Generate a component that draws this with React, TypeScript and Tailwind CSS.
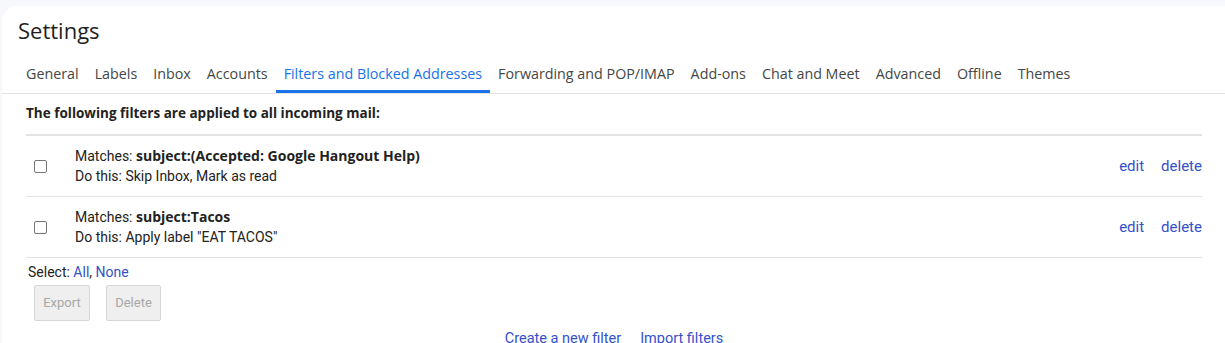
const tabs = [
  "General",
  "Labels",
  "Inbox",
  "Accounts",
  "Filters and Blocked Addresses",
  "Forwarding and POP/IMAP",
  "Add-ons",
  "Chat and Meet",
  "Advanced",
  "Offline",
  "Themes",
];

const filters = [
  { match: "subject:(Accepted: Google Hangout Help)", action: "Skip Inbox, Mark as read" },
  { match: "subject:Tacos", action: 'Apply label "EAT TACOS"' },
];

export default function App() {
  return (
    <div className="h-[343px] overflow-hidden bg-[#f6f8fc] pl-[2px] pt-[6px] font-['Roboto',_'Liberation_Sans',_sans-serif]">
      <div className="h-full rounded-tl-2xl bg-white">
        <h1 className="pl-[16px] pt-[10px] text-[22px] leading-[28px] text-[#1f1f1f] font-['Open_Sans',_'Roboto',_sans-serif]">
          Settings
        </h1>

        <div className="mt-[11px] flex border-b border-[#e3e3e3] pl-[16px] font-['Open_Sans',_'Roboto',_sans-serif]">
          {tabs.map((tab) => {
            const active = tab === "Filters and Blocked Addresses";
            return (
              <div
                key={tab}
                className={
                  active
                    ? "flex h-[38px] items-center px-2 pb-[1px] text-[14.3px] text-[#1a73e8] shadow-[inset_0_-3px_0_#1a73e8]"
                    : "flex h-[38px] items-center px-2 pb-[1px] text-[14.3px] text-[#444746]"
                }
              >
                {tab}
              </div>
            );
          })}
        </div>

        <div className="pl-[24px] pr-[23px] text-[14px] text-[#222]">
          <div className="flex h-[42px] items-center border-b-2 border-[#e3e3e3] pb-[1px] text-[13.5px] font-bold font-['Open_Sans',_'Roboto',_sans-serif]">
            The following filters are applied to all incoming mail:
          </div>

          {filters.map((f) => (
            <div key={f.match} className="flex h-[61px] items-center border-b border-[#e3e3e3]">
              <div className="flex w-[49px] justify-start pl-[8px]">
                <span className="block h-[13px] w-[13px] rounded-[2px] border border-[#767676] bg-white" />
              </div>
              <div className="flex-1 leading-[20px]">
                <div>
                  Matches:{" "}
                  <b className="font-['Open_Sans',_'Roboto',_sans-serif]">{f.match}</b>
                </div>
                <div>Do this: {f.action}</div>
              </div>
              <div className="flex gap-[17px] text-[15px] text-[#3451c9]">
                <span>edit</span>
                <span>delete</span>
              </div>
            </div>
          ))}

          <div className="pl-[2px] pt-[5px] leading-[18px]">
            Select: <span className="text-[#3451c9]">All</span>,{" "}
            <span className="text-[#3451c9]">None</span>
          </div>

          <div className="mt-[4px] flex gap-[16px] pl-[8px]">
            <button className="h-[36px] w-[56px] rounded-[2px] border border-[#d6d6d6] bg-[#efefef] text-[13px] text-[#a8a8a8]">
              Export
            </button>
            <button className="h-[36px] w-[55px] rounded-[2px] border border-[#d6d6d6] bg-[#efefef] text-[13px] text-[#a8a8a8]">
              Delete
            </button>
          </div>

          <div className="mt-[8px] flex justify-center gap-[19px] text-[14.5px] leading-[20px] text-[#3451c9]">
            <span>Create a new filter</span>
            <span>Import filters</span>
          </div>
        </div>
      </div>
    </div>
  );
}
